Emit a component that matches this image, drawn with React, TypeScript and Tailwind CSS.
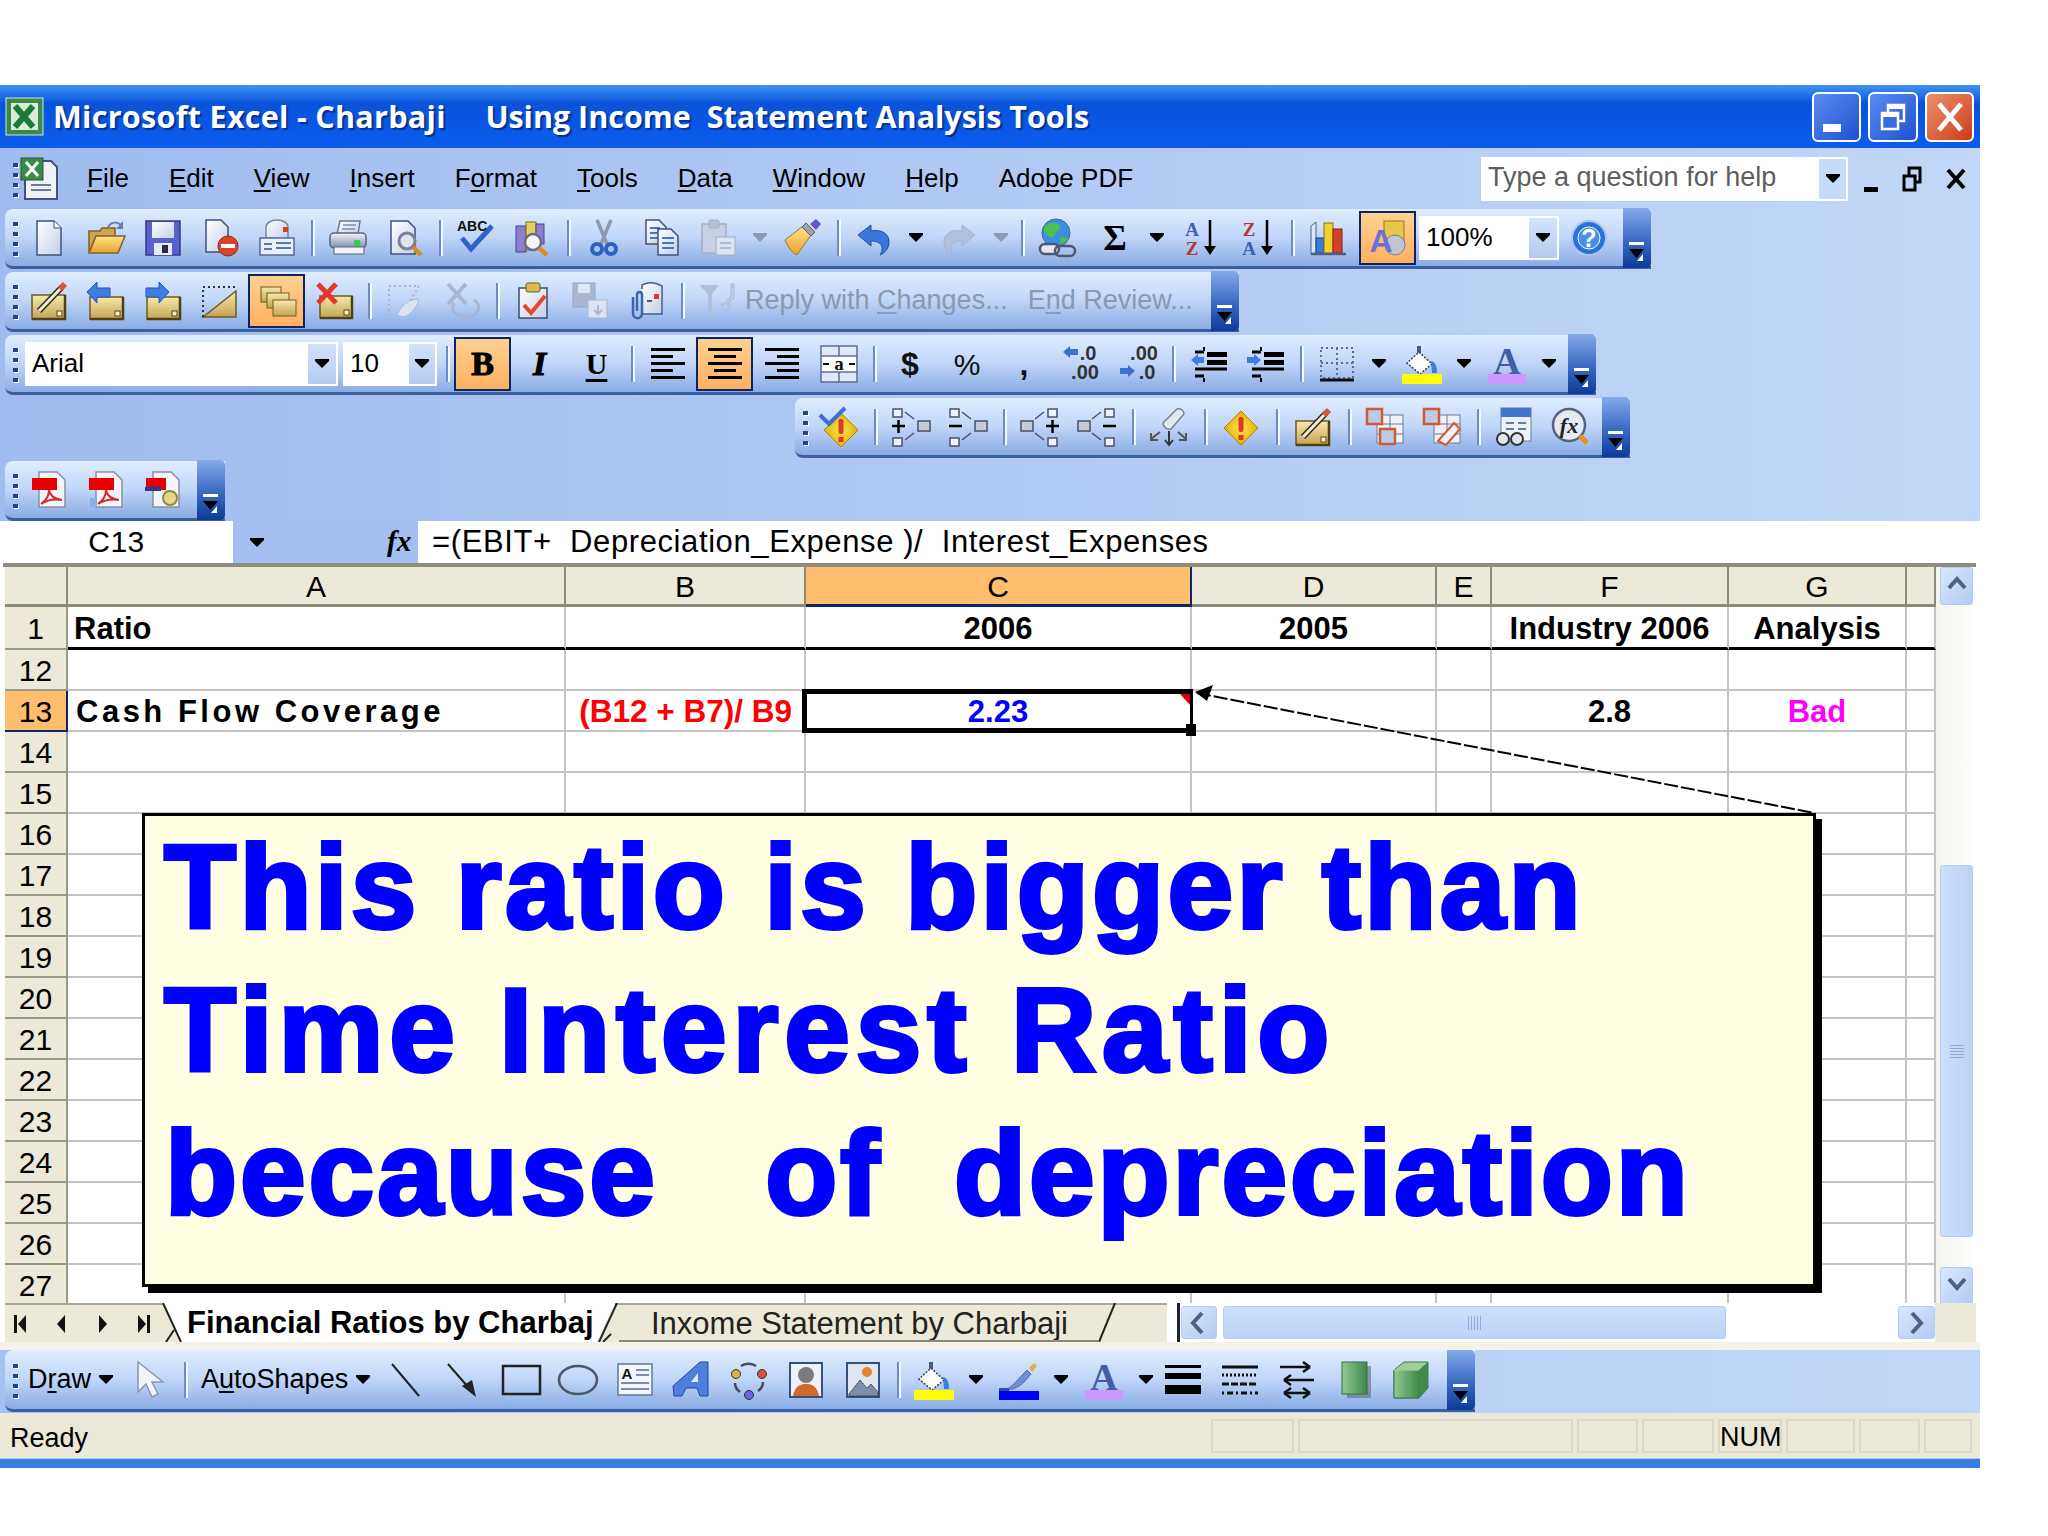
import type { ReactNode } from 'react';

const sans = "font-['Liberation_Sans',Arial,sans-serif]";

function Ico({ children, size = 40 }: { children: ReactNode; size?: number }) {
  return (
    <svg width={size} height={size} viewBox="0 0 40 40" className="block shrink-0 overflow-visible">
      {children}
    </svg>
  );
}

function Defs() {
  return (
    <svg width="0" height="0" className="absolute">
      <defs>
        <linearGradient id="paper" x1="0" y1="0" x2="1" y2="1">
          <stop offset="0" stopColor="#ffffff" />
          <stop offset="1" stopColor="#c3cfe8" />
        </linearGradient>
        <linearGradient id="gold" x1="0" y1="0" x2="0" y2="1">
          <stop offset="0" stopColor="#f6e9ad" />
          <stop offset="1" stopColor="#c2a452" />
        </linearGradient>
        <linearGradient id="folder" x1="0" y1="0" x2="0" y2="1">
          <stop offset="0" stopColor="#ffe38c" />
          <stop offset="1" stopColor="#e5a22b" />
        </linearGradient>
        <linearGradient id="metal" x1="0" y1="0" x2="0" y2="1">
          <stop offset="0" stopColor="#f4f6fb" />
          <stop offset="1" stopColor="#7f8ba8" />
        </linearGradient>
        <linearGradient id="green" x1="0" y1="0" x2="1" y2="0">
          <stop offset="0" stopColor="#8fca8f" />
          <stop offset="1" stopColor="#3f8a4a" />
        </linearGradient>
        <radialGradient id="warn" cx="0.5" cy="0.5" r="0.6">
          <stop offset="0" stopColor="#ffe74a" />
          <stop offset="1" stopColor="#d9a400" />
        </radialGradient>
      </defs>
    </svg>
  );
}

function Page({ x = 8, y = 3, w = 23, h = 33 }: { x?: number; y?: number; w?: number; h?: number }) {
  return (
    <path
      d={`M${x} ${y}h${w - 7}l7 7v${h - 7}h-${w}z`}
      fill="url(#paper)"
      stroke="#41507c"
      strokeWidth="1.5"
    />
  );
}

function NoteBase({ x = 5, y = 13, w = 31, h = 24 }: { x?: number; y?: number; w?: number; h?: number }) {
  return (
    <g>
      <rect x={x} y={y} width={w} height={h} fill="url(#gold)" stroke="#6e5a20" strokeWidth="1.5" />
      <path d={`M${x + w} ${y}v${h}h-${w}`} fill="none" stroke="#4f3f12" strokeWidth="2.5" />
      <rect x={x + w - 8} y={y + h - 8} width="5" height="5" fill="#f8f0c8" stroke="#5a4815" />
    </g>
  );
}

// row 1
const New = () => (<Ico><Page x={8} y={3} w={24} h={34} /><path d="M25 3v7h7" fill="#fff" stroke="#41507c" /></Ico>);
const Open = () => (
  <Ico>
    <path d="M3 34V13h11l2-3h13v7" fill="#cda650" stroke="#7d6322" strokeWidth="1.5" />
    <path d="M3 35l7-17h29l-7 17z" fill="url(#folder)" stroke="#7d6322" strokeWidth="1.5" />
    <path d="M22 9c3-5 9-6 13-2" fill="none" stroke="#6080bd" strokeWidth="2" />
    <path d="M37 3v8h-7z" fill="#6080bd" />
  </Ico>
);
const Save = () => (
  <Ico>
    <rect x="3" y="3" width="34" height="34" fill="#5c60c9" stroke="#34388c" strokeWidth="1.5" />
    <rect x="9" y="4" width="22" height="16" fill="url(#paper)" />
    <rect x="11" y="25" width="18" height="12" fill="#e6e9f5" />
    <rect x="19" y="27" width="6" height="8" fill="#2a2a40" />
  </Ico>
);
const Perm = () => (
  <Ico>
    <Page x={6} y={2} w={22} h={32} />
    <circle cx="28" cy="28" r="10" fill="#d8452a" stroke="#8e2a16" />
    <rect x="21" y="26" width="14" height="4" fill="#fff" />
  </Ico>
);
const Mail = () => (
  <Ico>
    <path d="M9 20V9c0-4 5-7 11-7s11 3 11 7v12z" fill="url(#paper)" stroke="#7a86a8" strokeWidth="1.5" />
    <rect x="26" y="9" width="5" height="5" fill="#df3d2a" />
    <rect x="3" y="20" width="34" height="17" fill="#e9effb" stroke="#56679a" strokeWidth="1.5" />
    <path d="M7 26h8M7 31h8M19 25h15M19 30h15" stroke="#5a76b6" strokeWidth="2" />
  </Ico>
);
const Print = () => (
  <Ico>
    <path d="M12 3h20l-2 13H9z" fill="url(#paper)" stroke="#6f7890" strokeWidth="1.5" />
    <path d="M15 7h13M14 11h13" stroke="#7f8aa8" strokeWidth="1.5" />
    <rect x="2" y="15" width="36" height="15" rx="4" fill="url(#metal)" stroke="#5b647c" strokeWidth="1.5" />
    <rect x="6" y="29" width="30" height="7" fill="#f2f4fa" stroke="#5b647c" />
    <rect x="26" y="22" width="6" height="6" fill="#2fd257" />
  </Ico>
);
const Preview = () => (
  <Ico>
    <Page x={6} y={3} w={24} h={33} />
    <circle cx="22" cy="23" r="8" fill="#dfe4ee" stroke="#7a8196" strokeWidth="3" />
    <path d="M28 29l8 8" stroke="#d98a25" strokeWidth="4.5" />
  </Ico>
);
const Spell = () => (
  <Ico>
    <text x="1" y="13" fontSize="14" fontWeight="700" fontFamily="Liberation Sans" fill="#111">ABC</text>
    <path d="M6 20l9 11L36 8" fill="none" stroke="#2f62c8" strokeWidth="5" />
  </Ico>
);
const Research = () => (
  <Ico>
    <rect x="3" y="8" width="10" height="26" fill="#8c7fcf" stroke="#4c4590" />
    <rect x="13" y="4" width="10" height="28" fill="#e4cf62" stroke="#7d6f1f" />
    <rect x="23" y="6" width="8" height="20" fill="#8c7fcf" stroke="#4c4590" />
    <circle cx="20" cy="24" r="8" fill="#f2f4f8" stroke="#6b6f7d" strokeWidth="2.5" />
    <path d="M26 30l8 7" stroke="#d98a25" strokeWidth="4.5" />
  </Ico>
);
const Cut = () => (
  <Ico>
    <path d="M13 2l10 24M27 2L17 26" stroke="#8d97ad" strokeWidth="3.5" />
    <circle cx="13" cy="31" r="5" fill="none" stroke="#2d62c4" strokeWidth="4" />
    <circle cx="27" cy="31" r="5" fill="none" stroke="#2d62c4" strokeWidth="4" />
  </Ico>
);
const Copy = () => (
  <Ico>
    <Page x={5} y={2} w={20} h={24} />
    <path d="M9 10h10M9 15h10M9 20h8" stroke="#4875c8" strokeWidth="2" />
    <Page x={17} y={11} w={20} h={26} />
    <path d="M21 20h12M21 25h12M21 30h12" stroke="#4875c8" strokeWidth="2" />
  </Ico>
);
const Paste = () => (
  <Ico>
    <rect x="4" y="6" width="24" height="29" fill="#c7cfe2" stroke="#a4aec8" strokeWidth="1.5" />
    <rect x="11" y="2" width="10" height="8" rx="2" fill="#b7c0d6" stroke="#a4aec8" />
    <rect x="18" y="19" width="19" height="18" fill="#dde3f0" stroke="#a4aec8" />
    <path d="M22 25h11M22 30h11" stroke="#aeb8cf" strokeWidth="2" />
  </Ico>
);
const Brush = () => (
  <Ico>
    <path d="M2 22 20 8l8 9-14 20c-5-2-9-8-12-15z" fill="url(#folder)" stroke="#8d7a3a" />
    <path d="M19 9l9 9 4-4-9-9z" fill="#9ea4ad" stroke="#5d626c" />
    <path d="M27 6l6-5 5 5-5 6z" fill="#6a55c0" />
  </Ico>
);
const Undo = () => (
  <Ico>
    <path d="M4 17 17 7v6c11-2 18 3 18 11 0 6-4 11-9 13 4-6 3-14-9-14v5z" fill="#3a76dc" stroke="#1f4fa8" />
  </Ico>
);
const Redo = () => (
  <svg width="40" height="40" viewBox="0 0 40 40" className="block shrink-0 -scale-x-100">
    <path d="M4 17 17 7v6c11-2 18 3 18 11 0 6-4 11-9 13 4-6 3-14-9-14v5z" fill="#b3c0da" stroke="#a4b2d0" />
  </svg>
);
const Link = () => (
  <Ico>
    <circle cx="18" cy="15" r="14" fill="#3d8ee0" stroke="#3a6aa8" />
    <path d="M8 7c6-4 12-3 14 1 1 4-4 4-5 8s-5 4-8 1-4-7-1-10z" fill="#4cc04a" />
    <path d="M22 20c4-2 7-1 8 1-2 3-5 5-8 5z" fill="#4cc04a" />
    <rect x="2" y="26" width="19" height="10" rx="5" fill="#e4e8f2" stroke="#4e586f" strokeWidth="2.5" />
    <rect x="17" y="28" width="20" height="10" rx="5" fill="none" stroke="#4e586f" strokeWidth="2.5" />
  </Ico>
);
const Sigma = () => (
  <Ico>
    <text x="20" y="32" textAnchor="middle" fontSize="36" fontWeight="700" fontFamily="Liberation Serif" fill="#000">Σ</text>
  </Ico>
);
const Sort = ({ up }: { up?: boolean }) => (
  <Ico>
    <text x="12" y="18" textAnchor="middle" fontSize="19" fontWeight="700" fontFamily="Liberation Serif" fill={up ? '#b03a30' : '#3b62b4'}>{up ? 'Z' : 'A'}</text>
    <text x="12" y="37" textAnchor="middle" fontSize="19" fontWeight="700" fontFamily="Liberation Serif" fill={up ? '#3b62b4' : '#b03a30'}>{up ? 'A' : 'Z'}</text>
    <path d="M30 2v30" stroke="#000" strokeWidth="2.5" />
    <path d="M24 28h12l-6 9z" fill="#000" />
  </Ico>
);
const Chart = () => (
  <Ico>
    <path d="M3 36V8l5-4v28" fill="#dfe6f5" stroke="#4d5f8e" />
    <rect x="8" y="20" width="8" height="15" fill="#3b7ce2" stroke="#1d3f82" />
    <rect x="16" y="5" width="9" height="30" fill="#f1d032" stroke="#8a7410" />
    <rect x="25" y="11" width="9" height="24" fill="#d8402a" stroke="#7e2212" />
    <path d="M3 36h35" stroke="#4d5f8e" strokeWidth="2.5" />
  </Ico>
);
const DrawTool = () => (
  <Ico>
    <rect x="16" y="3" width="20" height="20" fill="#e8c64a" stroke="#8f7a26" />
    <circle cx="27" cy="27" r="10" fill="#bfc5d4" stroke="#777e90" />
    <text x="13" y="34" textAnchor="middle" fontSize="32" fontWeight="700" fontFamily="Liberation Sans" fill="#6f70d4">A</text>
  </Ico>
);
const Help = () => (
  <Ico>
    <circle cx="20" cy="20" r="17" fill="#2a72d8" stroke="#a9c6f2" strokeWidth="2" />
    <circle cx="20" cy="20" r="11" fill="#4a8fe6" stroke="#fff" />
    <text x="20" y="29" textAnchor="middle" fontSize="25" fontWeight="700" fontFamily="Liberation Sans" fill="#fff">?</text>
  </Ico>
);

// row 2
const NewNote = () => (
  <Ico>
    <NoteBase x={3} y={14} w={33} h={24} />
    <path d="M10 30 33 6" stroke="#2e2a18" strokeWidth="6" />
    <path d="M10 30 33 6" stroke="#f4ecd4" strokeWidth="3" />
    <path d="M31 8l5-5" stroke="#d8543a" strokeWidth="6" />
  </Ico>
);
const PrevNote = ({ next }: { next?: boolean }) => (
  <Ico>
    <NoteBase x={4} y={16} w={33} h={22} />
    {next ? <path d="M26 11 16 1v6H3v9h13v6z" fill="#3f7ce4" stroke="#2257b4" /> : <path d="M1 11 11 1v6h13v9H11v6z" fill="#3f7ce4" stroke="#2257b4" />}
  </Ico>
);
const ShowNote = () => (
  <Ico>
    <path d="M3 36 36 10v26z" fill="url(#gold)" stroke="#6e5a20" strokeWidth="1.5" />
    <path d="M3 36V6h33" fill="none" stroke="#333" strokeWidth="2" strokeDasharray="2 3" />
  </Ico>
);
const AllNotes = () => (
  <Ico>
    <rect x="4" y="6" width="20" height="15" fill="url(#gold)" stroke="#6e5a20" />
    <rect x="10" y="12" width="22" height="15" fill="url(#gold)" stroke="#6e5a20" />
    <rect x="16" y="19" width="23" height="16" fill="url(#gold)" stroke="#6e5a20" />
  </Ico>
);
const DelNote = () => (
  <Ico>
    <NoteBase x={6} y={15} w={32} h={22} />
    <path d="M4 3l18 19M22 3 4 22" stroke="#e8352a" strokeWidth="5" />
  </Ico>
);
const InkGrey = () => (
  <Ico>
    <path d="M4 35V5h30l-12 20" fill="none" stroke="#a8b4cf" strokeWidth="2" strokeDasharray="2 3" />
    <path d="M12 34c4-10 12-16 22-16-2 8-8 16-16 18z" fill="#dbe2f0" stroke="#aeb9d0" />
  </Ico>
);
const DelInk = () => (
  <Ico>
    <path d="M6 3l18 20M24 3 6 23" stroke="#aab6d0" strokeWidth="4" />
    <path d="M12 22c-5 10 6 15 16 13s11-12 4-16" fill="none" stroke="#aab6d0" strokeWidth="3" />
  </Ico>
);
const Track = () => (
  <Ico>
    <rect x="6" y="7" width="28" height="30" fill="url(#paper)" stroke="#3d4a70" strokeWidth="1.5" />
    <rect x="13" y="2" width="14" height="9" rx="2" fill="#d9bb55" stroke="#6e5a20" />
    <path d="M11 24l7 8 14-17" fill="none" stroke="#e8452a" strokeWidth="4" />
  </Ico>
);
const SaveSend = () => (
  <Ico>
    <rect x="3" y="2" width="22" height="24" fill="#aab5cf" stroke="#98a5c2" />
    <rect x="8" y="3" width="12" height="9" fill="#dfe5f2" />
    <rect x="18" y="19" width="19" height="18" fill="#dde3f0" stroke="#aab5cf" />
    <path d="M28 24v9M24 29l4 4 4-4" fill="none" stroke="#aab5cf" strokeWidth="2" />
  </Ico>
);
const Clip = () => (
  <Ico>
    <path d="M15 8V4c6-3 13-3 20 1v28H14" fill="url(#paper)" stroke="#4a5b8a" strokeWidth="1.5" />
    <rect x="27" y="13" width="5" height="5" fill="#e0392a" />
    <path d="M20 20h5" stroke="#4a5b8a" strokeWidth="2" />
    <path d="M6 16v16c0 7 9 7 9 0V14c0-4-5-4-5 0v16" fill="none" stroke="#3f63ad" strokeWidth="2.5" />
  </Ico>
);
const FlagReply = () => (
  <Ico>
    <path d="M1 4h20l-7 9v20l-4 1V13z" fill="#b3bfd6" />
    <path d="M36 3v14l-7 6h4l-5 7-5-7h3l7-8V3z" fill="#c1ccdf" stroke="#a9b6cf" />
  </Ico>
);

// row 3
const GlyphB = () => <span className="font-['Liberation_Serif',serif] font-bold text-[34px] leading-none text-black [-webkit-text-stroke:1px_#000]">B</span>;
const GlyphI = () => <span className="font-['Liberation_Serif',serif] font-bold italic text-[34px] leading-none text-black [-webkit-text-stroke:1px_#000]">I</span>;
const GlyphU = () => <span className="font-['Liberation_Serif',serif] font-bold underline decoration-[3px] underline-offset-[5px] text-[30px] leading-none text-black">U</span>;
const Align = ({ mode }: { mode: 'l' | 'c' | 'r' }) => {
  const w = [34, 22, 34, 22, 34];
  return (
    <Ico>
      {w.map((v, i) => {
        const x = mode === 'l' ? 3 : mode === 'c' ? 20 - v / 2 : 37 - v;
        return <rect key={i} x={x} y={4 + i * 7} width={v} height="3" fill="#000" />;
      })}
    </Ico>
  );
};
const Merge = () => (
  <Ico>
    <rect x="2" y="2" width="36" height="36" fill="#e2e8f5" stroke="#5d6c92" strokeWidth="1.5" />
    <rect x="3" y="12" width="34" height="16" fill="#fff" />
    <path d="M2 12h36M2 28h36M20 2v10M20 28v10" stroke="#5d6c92" strokeWidth="1.5" />
    <text x="20" y="26" textAnchor="middle" fontSize="19" fontWeight="700" fontFamily="Liberation Serif" fill="#111">a</text>
    <path d="M4 20h6M30 20h6" stroke="#111" strokeWidth="2" />
  </Ico>
);
const TextGlyph = ({ t, size = 32, cls = 'font-bold' }: { t: string; size?: number; cls?: string }) => (
  <Ico>
    <text x="20" y="31" textAnchor="middle" fontSize={size} fontFamily="Liberation Sans" fill="#111" className={cls}>{t}</text>
  </Ico>
);
const Decimal = ({ less }: { less?: boolean }) => (
  <Ico>
    <text x={less ? 26 : 27} y="16" textAnchor="middle" fontSize="20" fontWeight="700" fontFamily="Liberation Sans" fill="#333">{less ? '.00' : '.0'}</text>
    <text x={less ? 29 : 24} y="35" textAnchor="middle" fontSize="20" fontWeight="700" fontFamily="Liberation Sans" fill="#333">{less ? '.0' : '.00'}</text>
    {less ? <path d="M2 24h8v-3l7 6-7 6v-3H2z" fill="#3f6fd0" /> : <path d="M17 5H9V2L2 8l7 6v-3h8z" fill="#3f6fd0" />}
  </Ico>
);
const Indent = ({ more }: { more?: boolean }) => (
  <Ico>
    <path d="M15 3v4M15 34v4" stroke="#000" strokeWidth="2" />
    <rect x="18" y="8" width="20" height="5" fill="#000" />
    <rect x="18" y="16" width="20" height="5" fill="#000" />
    <path d="M6 8h9M6 25h32M6 32h9" stroke="#000" strokeWidth="3" />
    {more ? <path d="M1 13h7v-3l7 6-7 6v-3H1z" fill="#3f7ce4" /> : <path d="M15 13H9v-3l-7 6 7 6v-3h6z" fill="#3f7ce4" />}
  </Ico>
);
const Borders = () => (
  <Ico>
    <rect x="4" y="4" width="32" height="30" fill="none" stroke="#5f6b88" strokeWidth="2" strokeDasharray="2 3" />
    <path d="M20 4v30M4 19h32" stroke="#5f6b88" strokeWidth="2" strokeDasharray="2 3" />
    <path d="M3 36h34" stroke="#111" strokeWidth="3" />
  </Ico>
);
const Fill = () => (
  <Ico>
    <path d="M17 2v10" stroke="#4d5b7c" strokeWidth="4" />
    <path d="M17 8 30 20 18 30 5 19z" fill="#fff" stroke="#333d58" strokeWidth="1.5" strokeDasharray="2 1.5" />
    <path d="M29 17c4 1 6 4 6 12h-5z" fill="#3f7ce4" />
    <rect x="0" y="30" width="40" height="10" fill="#ffff00" />
  </Ico>
);
const FontColor = () => (
  <Ico>
    <text x="20" y="30" textAnchor="middle" fontSize="38" fontWeight="700" fontFamily="Liberation Serif" fill="#3f5fa8">A</text>
    <rect x="1" y="30" width="38" height="10" fill="#cc99ff" />
  </Ico>
);

// row 4
const Warn = ({ s = 0 }: { s?: number }) => (
  <g transform={`translate(${s} ${s})`}>
    <path d="M20 4 37 21 20 38 3 21z" fill="url(#warn)" stroke="#b38600" />
    <rect x="17.5" y="10" width="5" height="15" rx="2" fill="#e5332a" />
    <rect x="17.5" y="28" width="5" height="5" fill="#e5332a" />
  </g>
);
const CheckWarn = () => (<Ico><Warn s={2} /><path d="M1 8l9 9L26 1" fill="none" stroke="#3a6fd6" strokeWidth="4" /></Ico>);
const Box = ({ x, y, w = 9, h = 8 }: { x: number; y: number; w?: number; h?: number }) => (
  <rect x={x} y={y} width={w} height={h} fill="#eef2fb" stroke="#49506a" strokeWidth="1.5" />
);
const Prec = ({ minus }: { minus?: boolean }) => (
  <Ico>
    <Box x={2} y={2} />
    <Box x={2} y={31} />
    <rect x="27" y="14" width="12" height="10" fill="#c7ccd8" stroke="#49506a" strokeWidth="1.5" />
    <path d="M14 5l9 7M14 33l9-7" stroke="#49506a" strokeWidth="1.5" />
    <path d="M1 19h13" stroke="#000" strokeWidth="2.5" />
    {!minus && <path d="M7.5 13v13" stroke="#000" strokeWidth="2.5" />}
  </Ico>
);
const Dep = ({ minus }: { minus?: boolean }) => (
  <Ico>
    <Box x={28} y={2} />
    <Box x={28} y={31} />
    <rect x="1" y="14" width="12" height="10" fill="#c7ccd8" stroke="#49506a" strokeWidth="1.5" />
    <path d="M15 12l9-7M15 26l9 7" stroke="#49506a" strokeWidth="1.5" />
    <path d="M26 19h13" stroke="#000" strokeWidth="2.5" />
    {!minus && <path d="M32.5 13v13" stroke="#000" strokeWidth="2.5" />}
  </Ico>
);
const Eraser = () => (
  <Ico>
    <path d="M14 16 28 2c3-1 7 1 7 5L22 22c-4 1-8-2-8-6z" fill="#e4e8f0" stroke="#79829a" strokeWidth="1.5" />
    <path d="M20 24v13M16 33l4 5 4-5" fill="none" stroke="#333" strokeWidth="2" />
    <path d="M11 25l-9 7M2 26v7h7M29 25l8 7M37 26v7h-7" fill="none" stroke="#555" strokeWidth="2" />
  </Ico>
);
const Watch = ({ erase }: { erase?: boolean }) => (
  <Ico>
    <rect x="12" y="8" width="26" height="28" fill="#eef1f8" stroke="#6f7a96" />
    <path d="M25 8v28M12 17h26M12 27h26" stroke="#6f7a96" />
    <rect x="2" y="2" width="15" height="15" fill="#b8cbe8" stroke="#d05a32" strokeWidth="2.5" />
    {erase ? <path d="M16 34 32 16l6 6-14 16z" fill="#eef1f8" stroke="#d05a32" strokeWidth="2" /> : <rect x="15" y="22" width="15" height="15" fill="#b8cbe8" stroke="#d05a32" strokeWidth="2.5" />}
  </Ico>
);
const Calc = () => (
  <Ico>
    <rect x="7" y="1" width="30" height="33" fill="#edf1fa" stroke="#6b7b9d" />
    <rect x="7" y="1" width="30" height="9" fill="#4576ce" />
    <path d="M12 16h8M24 16h8M12 22h8M24 22h8" stroke="#6b7b9d" strokeWidth="2" />
    <circle cx="9" cy="32" r="6" fill="#dfe5ee" stroke="#333" strokeWidth="2" />
    <circle cx="23" cy="32" r="6" fill="#dfe5ee" stroke="#333" strokeWidth="2" />
  </Ico>
);
const FxMag = () => (
  <Ico>
    <circle cx="18" cy="18" r="16" fill="#e4e9f3" stroke="#59627a" strokeWidth="2.5" />
    <text x="18" y="26" textAnchor="middle" fontSize="22" fontStyle="italic" fontWeight="700" fontFamily="Liberation Serif" fill="#222">fx</text>
    <path d="M29 29l7 7" stroke="#e09428" strokeWidth="5" />
  </Ico>
);

// row 5
const Pdf = ({ v }: { v: number }) => (
  <Ico>
    <path d="M10 2h18l8 8v27H10z" fill="#f4f5f8" stroke="#8b90a0" strokeWidth="1.5" />
    <rect x="3" y="8" width={v === 2 ? 20 : 25} height="12" fill="#e80000" />
    {v === 2 ? (
      <>
        <path d="M2 19h16" stroke="#203a9c" strokeWidth="4" />
        <circle cx="27" cy="28" r="7" fill="#e4d98a" stroke="#8b8a40" strokeWidth="2" />
      </>
    ) : (
      <path d="M12 34c6-4 8-10 8-14 1 6 5 9 13 10-7-1-15 0-21 4z" fill="none" stroke="#d8262a" strokeWidth="2" />
    )}
    {v === 1 && <rect x="4" y="28" width="6" height="9" fill="#8cb0ec" />}
  </Ico>
);

// drawing row
const Cursor = () => (
  <Ico>
    <path d="M8 2v30l8-8 6 13 6-3-6-12h11z" fill="#f2f4fa" stroke="#8b96b0" strokeWidth="1.5" />
  </Ico>
);
const LineTool = () => (<Ico><path d="M5 4 32 36" stroke="#222" strokeWidth="2" /></Ico>);
const ArrowTool = () => (<Ico><path d="M4 4 24 27" stroke="#222" strokeWidth="2" /><path d="M18 26l10-6 4 17z" fill="#222" /></Ico>);
const RectTool = () => (<Ico><rect x="2" y="6" width="37" height="28" fill="none" stroke="#222" strokeWidth="2.5" /></Ico>);
const OvalTool = () => (<Ico><ellipse cx="20" cy="20" rx="19" ry="14" fill="none" stroke="#4d5567" strokeWidth="2.5" /></Ico>);
const TextBox = () => (
  <Ico>
    <rect x="3" y="4" width="34" height="31" fill="#f3f6fc" stroke="#66759a" strokeWidth="1.5" />
    <text x="12" y="19" textAnchor="middle" fontSize="15" fontWeight="700" fontFamily="Liberation Sans" fill="#111">A</text>
    <path d="M21 10h13M21 15h13M6 23h28M6 29h28" stroke="#7d8cae" strokeWidth="2" />
  </Ico>
);
const WordArt = () => (
  <Ico>
    <path d="M1 26 28 2h8v34h-8l-3-8H14l-4 8H2z" fill="#4f7fdc" stroke="#1f4aa2" />
    <path d="M19 22l7-9v9z" fill="#dfe9fb" />
  </Ico>
);
const Diagram = () => (
  <Ico>
    <circle cx="7" cy="14" r="4.5" fill="#d6b83a" stroke="#333" />
    <circle cx="33" cy="14" r="4.5" fill="#d8503a" stroke="#333" />
    <circle cx="20" cy="35" r="4.5" fill="#6f66d8" stroke="#333" />
    <path d="M12 6c4-3 11-3 15 0M34 22c0 4-2 7-5 9M11 32c-3-2-5-5-5-9" fill="none" stroke="#444a5c" strokeWidth="2.5" />
  </Ico>
);
const ClipArt = () => (
  <Ico>
    <rect x="4" y="3" width="32" height="34" fill="#eef2f8" stroke="#33507e" strokeWidth="2" />
    <circle cx="20" cy="15" r="8" fill="#7c7c7c" />
    <path d="M7 36c2-10 7-12 13-12s11 2 13 12z" fill="#d0692a" />
  </Ico>
);
const Picture = () => (
  <Ico>
    <rect x="4" y="3" width="32" height="34" fill="#dfe6f2" stroke="#33507e" strokeWidth="2" />
    <circle cx="24" cy="12" r="5" fill="#e88430" />
    <path d="M6 34 17 20l7 8 4-4 7 8v4H6z" fill="#7f8da8" stroke="#333" strokeDasharray="2 1" />
  </Ico>
);
const Pen = () => (
  <Ico>
    <path d="M6 30c8-3 12-10 22-20l4 4C24 24 18 30 6 30z" fill="#6f8fd8" stroke="#4f6cb5" />
    <path d="M30 8l5-5 3 3-5 6z" fill="#e0b040" />
    <rect x="0" y="28" width="10" height="4" fill="#2f4fa8" />
    <rect x="0" y="31" width="40" height="9" fill="#0000ff" />
  </Ico>
);
const LineStyle = () => (
  <Ico>
    <rect x="2" y="5" width="36" height="3" fill="#000" />
    <rect x="2" y="13" width="36" height="6" fill="#000" />
    <rect x="2" y="25" width="36" height="9" fill="#000" />
  </Ico>
);
const DashStyle = () => (
  <Ico>
    <path d="M2 7h36" stroke="#111" strokeWidth="3" />
    <path d="M2 15h36" stroke="#111" strokeWidth="3" strokeDasharray="2 2" />
    <path d="M2 24h36" stroke="#111" strokeWidth="3" strokeDasharray="7 2" />
    <path d="M2 33h36" stroke="#111" strokeWidth="3" strokeDasharray="2 3 6 3" />
  </Ico>
);
const ArrowStyle = () => (
  <Ico>
    <path d="M3 7h30M33 7l-7-5M33 7l-7 5" fill="none" stroke="#111" strokeWidth="2.5" />
    <path d="M37 20H7M7 20l7-5M7 20l7 5" fill="none" stroke="#111" strokeWidth="2.5" />
    <path d="M7 33h26M7 33l7-5M7 33l7 5M33 33l-7-5M33 33l-7 5" fill="none" stroke="#111" strokeWidth="2.5" />
  </Ico>
);
const Shadow = () => (
  <Ico>
    <rect x="13" y="6" width="24" height="32" fill="#5e6b80" opacity="0.6" />
    <rect x="8" y="2" width="25" height="32" fill="url(#green)" stroke="#357040" />
  </Ico>
);
const Cube = () => (
  <Ico>
    <path d="M3 10 13 2h24v26l-9 10H3z" fill="#9fcf9f" stroke="#3c7a48" />
    <path d="M3 10h25v28H3z" fill="url(#green)" stroke="#3c7a48" />
    <path d="M28 10 37 2v26l-9 10z" fill="#3f8a4a" />
    <path d="M3 10h25" stroke="#cfe8cf" />
  </Ico>
);

// shared bits
function Grip() {
  return (
    <div className="flex w-[15px] shrink-0 flex-col gap-[6px] pl-[8px] pt-[2px]">
      {[0, 1, 2, 3].map((i) => (
        <div key={i} className="h-[4px] w-[5px] bg-[#27437f] shadow-[1px_1px_0_#fff]" />
      ))}
    </div>
  );
}

function Btn({ children, on }: { children: ReactNode; on?: boolean }) {
  return (
    <div className={`flex h-[54px] w-[57px] shrink-0 items-center justify-center ${on ? 'border-[2px] border-[#0a246a] bg-gradient-to-b from-[#ffd08f] to-[#ffb060]' : ''}`}>
      {children}
    </div>
  );
}

function Sep({ w = 14 }: { w?: number }) {
  return (
    <div className={`flex shrink-0 justify-center ${w === 15 ? 'w-[15px]' : 'w-[14px]'}`}>
      <div className="h-[36px] w-[2px] bg-[#6a8cc8] shadow-[2px_0_0_#f4f8ff]" />
    </div>
  );
}

function Tri({ grey }: { grey?: boolean }) {
  return (
    <svg width="14" height="9" viewBox="0 0 14 9" className="block">
      <path d="M0 0h14v2l-7 7-7-7z" fill={grey ? '#8f9ab2' : '#000'} />
    </svg>
  );
}

function Drop({ grey }: { grey?: boolean }) {
  return (
    <div className="flex w-[28px] shrink-0 items-center justify-center">
      <Tri grey={grey} />
    </div>
  );
}

function Chevron() {
  return (
    <div className="ml-auto flex h-[60px] w-[28px] shrink-0 flex-col items-center justify-end rounded-r-[5px] bg-gradient-to-b from-[#85aaea] via-[#3f6fc4] to-[#0b3a99] pb-[6px]">
      <svg width="18" height="20" viewBox="0 0 18 20" className="block">
        <rect x="1" y="0" width="15" height="3" fill="#fff" />
        <path d="M1 7h15L8.5 16z" fill="#000" />
        <path d="M9 19l6-7v7z" fill="#fff" />
      </svg>
    </div>
  );
}

function Toolbar({ className = '', children }: { className?: string; children: ReactNode }) {
  return (
    <div className={`flex h-[60px] items-center rounded-l-[8px] border-b-[3px] border-[#3b5f9f] bg-gradient-to-b from-[#e0edfe] via-[#c0d5f8] to-[#88ace4] ${className}`}>
      {children}
    </div>
  );
}

function Combo({ text, w, dd }: { text: string; w: string; dd: string }) {
  return (
    <div className={`flex h-[44px] items-stretch border-[2px] border-white bg-white ${w}`}>
      <span className={`flex-1 pl-[5px] text-[26px] leading-[38px] text-black ${sans}`}>{text}</span>
      <div className={`flex items-center justify-center bg-gradient-to-b from-[#d4e3fb] to-[#b4cbef] ${dd}`}>
        <Tri />
      </div>
    </div>
  );
}

function Key({ a, k, b }: { a?: string; k: string; b?: string }) {
  return (
    <span className="whitespace-pre">
      {a}
      <span className="underline decoration-[2px] underline-offset-[3px]">{k}</span>
      {b}
    </span>
  );
}

const menus: [string, string, string][] = [
  ['', 'F', 'ile'],
  ['', 'E', 'dit'],
  ['', 'V', 'iew'],
  ['', 'I', 'nsert'],
  ['F', 'o', 'rmat'],
  ['', 'T', 'ools'],
  ['', 'D', 'ata'],
  ['', 'W', 'indow'],
  ['', 'H', 'elp'],
  ['Ado', 'b', 'e PDF'],
];

const cols = 'grid grid-cols-[63px_498px_240px_386px_245px_55px_237px_178px_29px]';
const cellLine = 'border-r-[2px] border-b-[2px] border-[#c4c4c4] leading-none';
const rowNums = [12, 13, 14, 15, 16, 17, 18, 19, 20, 21, 22, 23, 24, 25, 26, 27];

function RowHead({ n, on, h }: { n: number; on?: boolean; h: string }) {
  return (
    <div className={`flex items-center justify-center border-r-[2px] border-b-[2px] border-[#9a9888] pt-[2px] text-[30px] leading-none text-black ${h} ${on ? 'bg-[#ffbe6d] border-b-[#0a246a] border-r-[#0a246a]' : 'bg-[#ece9d8]'}`}>
      {n}
    </div>
  );
}

function ColHead({ t, on }: { t: string; on?: boolean }) {
  return (
    <div className={`flex h-[40px] items-center justify-center border-r-[2px] border-b-[3px] pt-[3px] text-[30px] leading-none text-black ${on ? 'border-[#0a246a] bg-[#ffbe6d]' : 'border-[#8c8a78] bg-[#ece9d8]'}`}>
      {t}
    </div>
  );
}

function HeadCell({ t, center }: { t?: string; center?: boolean }) {
  return (
    <div className={`flex h-[43px] items-center border-r-[2px] border-b-[3px] border-r-[#c4c4c4] border-b-black pt-[2px] text-[31px] font-bold leading-none text-black ${center ? 'justify-center' : 'pl-[6px]'}`}>
      {t}
    </div>
  );
}

function GridRow({ n, h }: { n: number; h: string }) {
  if (n === 13) {
    return (
      <div className={cols}>
        <RowHead n={n} on h={h} />
        <div className={`flex items-center pl-[8px] pt-[2px] text-[31px] font-bold tracking-[3.5px] text-black ${cellLine}`}>Cash Flow Coverage</div>
        <div className={`flex items-center justify-end pr-[12px] pt-[2px] text-[31.5px] font-bold text-[#ff0000] ${cellLine}`}>(B12 + B7)/ B9</div>
        <div className={`relative flex items-center justify-center pt-[2px] text-[31px] font-bold text-[#0000ff] ${cellLine}`}>
          2.23
          <div className="absolute -top-[2px] -right-[3px] -bottom-[3px] -left-[4px] border-[5px] border-r-[3px] border-black" />
          <div className="absolute top-[3px] right-[0px] h-0 w-0 border-t-[11px] border-l-[10px] border-t-[#e00000] border-l-transparent" />
          <div className="absolute -right-[6px] -bottom-[6px] h-[12px] w-[10px] bg-black" />
        </div>
        <div className={cellLine} />
        <div className={cellLine} />
        <div className={`flex items-center justify-center pt-[2px] text-[31px] font-bold text-black ${cellLine}`}>2.8</div>
        <div className={`flex items-center justify-center pt-[2px] text-[31px] font-bold text-[#ff00ff] ${cellLine}`}>Bad</div>
        <div className={cellLine} />
      </div>
    );
  }
  return (
    <div className={cols}>
      <RowHead n={n} h={h} />
      {[0, 1, 2, 3, 4, 5, 6, 7].map((i) => (
        <div key={i} className={cellLine} />
      ))}
    </div>
  );
}

function ScrollBtn({ dir, cls }: { dir: 'u' | 'd' | 'l' | 'r'; cls: string }) {
  const d = { u: 'M3 14 11 5l8 9', d: 'M3 5l8 9 8-9', l: 'M14 2 5 12l9 10', r: 'M6 2l9 10-9 10' }[dir];
  return (
    <div className={`flex items-center justify-center rounded-[3px] border border-[#b5cbf3] bg-gradient-to-br from-[#dbe7fd] to-[#b3caf3] ${cls}`}>
      <svg width="22" height="24" viewBox="0 0 22 24" className="block">
        <path d={d} fill="none" stroke="#4d6185" strokeWidth="4" />
      </svg>
    </div>
  );
}

function NavArrow({ d }: { d: string }) {
  return (
    <svg width="14" height="22" viewBox="0 0 14 22" className="block">
      <path d={d} fill="#111" />
    </svg>
  );
}

export default function App() {
  return (
    <div className={`min-h-[1536px] w-[2048px] bg-white pt-[85px] ${sans}`}>
      <Defs />
      <div className="flex w-[1980px] flex-col">
        {/* title bar */}
        <div className="flex h-[63px] items-center bg-gradient-to-b from-[#3f93f0] via-[#0a52dc] via-[30%] to-[#0c5cec] pl-[5px] pr-[6px]">
          <svg width="39" height="39" viewBox="0 0 39 39" className="block shrink-0">
            <rect x="1" y="1" width="37" height="37" fill="#3a8a4a" stroke="#cfe8cf" />
            <rect x="6" y="6" width="27" height="27" fill="#d8ecd8" />
            <path d="M10 9l18 21M28 9 10 30" stroke="#1a7a3a" strokeWidth="6" />
          </svg>
          <span className="ml-[9px] whitespace-pre font-['Open_Sans',sans-serif] text-[30.5px] font-bold text-white [text-shadow:2px_2px_1px_#06308f]">
            <span className="tracking-[.3px]">Microsoft Excel - Charbaji</span>
            {'     Using Income  Statement Analysis Tools'}
          </span>
          <div className="ml-auto flex gap-[7px]">
            <div className="flex h-[50px] w-[49px] items-end justify-start rounded-[6px] border-[2px] border-white bg-gradient-to-br from-[#5b8cf0] to-[#1f4fd0] pb-[8px] pl-[9px]">
              <div className="h-[8px] w-[18px] bg-white" />
            </div>
            <div className="flex h-[50px] w-[50px] items-center justify-center rounded-[6px] border-[2px] border-white bg-gradient-to-br from-[#5b8cf0] to-[#1f4fd0]">
              <svg width="28" height="30" viewBox="0 0 28 30" className="block">
                <rect x="9" y="3" width="16" height="16" fill="none" stroke="#fff" strokeWidth="2.5" />
                <rect x="9" y="3" width="16" height="4" fill="#fff" />
                <rect x="3" y="11" width="16" height="16" fill="#3a6adf" stroke="#fff" strokeWidth="2.5" />
                <rect x="3" y="11" width="16" height="4" fill="#fff" />
              </svg>
            </div>
            <div className="flex h-[50px] w-[49px] items-center justify-center rounded-[6px] border-[2px] border-white bg-gradient-to-br from-[#ee8f6c] to-[#c93a12]">
              <svg width="30" height="32" viewBox="0 0 30 32" className="block">
                <path d="M4 3l22 26M26 3 4 29" stroke="#fff" strokeWidth="5" />
              </svg>
            </div>
          </div>
        </div>

        {/* command bars */}
        <div className="flex h-[373px] flex-col bg-gradient-to-r from-[#9fbcf0] to-[#c2d7f7]">
          <div className="flex h-[61px] items-center pl-[5px] pr-[6px] text-[26px] text-black">
            <Grip />
            <svg width="44" height="44" viewBox="0 0 44 44" className="-ml-[3px] block shrink-0">
              <path d="M8 4h26l6 6v32H8z" fill="#eef2fb" stroke="#41507c" strokeWidth="2" />
              <rect x="4" y="1" width="22" height="22" fill="#3a8a4a" stroke="#1f5a2a" />
              <path d="M9 5l12 14M21 5 9 19" stroke="#fff" strokeWidth="3" />
              <path d="M14 28h20M14 33h20" stroke="#6a7ba5" strokeWidth="2" />
            </svg>
            <div className="ml-[6px] flex">
              {menus.map(([a, k, b]) => (
                <div key={a + k + b} className="px-[20px]">
                  <Key a={a} k={k} b={b} />
                </div>
              ))}
            </div>
            <div className="ml-auto flex h-[44px] w-[367px] items-stretch border-[2px] border-white bg-white">
              <span className="flex-1 pl-[5px] text-[27px] leading-[36px] text-[#5d5d5d]">Type a question for help</span>
              <div className="flex w-[27px] items-center justify-center bg-[#c8daf9]">
                <Tri />
              </div>
            </div>
            <div className="ml-[14px] flex w-[112px] items-center justify-between pr-[8px]">
              <div className="mt-[22px] ml-[2px] h-[5px] w-[14px] bg-black" />
              <svg width="20" height="26" viewBox="0 0 20 26" className="block">
                <rect x="7" y="2" width="11" height="14" fill="none" stroke="#000" strokeWidth="3" />
                <rect x="2" y="10" width="11" height="14" fill="#c2d7f7" stroke="#000" strokeWidth="3" />
              </svg>
              <svg width="20" height="22" viewBox="0 0 20 22" className="block">
                <path d="M2 2l16 18M18 2 2 20" stroke="#000" strokeWidth="4" />
              </svg>
            </div>
          </div>

          <div className="flex flex-col gap-[3px] pl-[5px]">
            <Toolbar className="w-[1646px]">
              <Grip />
              <Btn><New /></Btn>
              <Btn><Open /></Btn>
              <Btn><Save /></Btn>
              <Btn><Perm /></Btn>
              <Btn><Mail /></Btn>
              <Sep />
              <Btn><Print /></Btn>
              <Btn><Preview /></Btn>
              <Sep />
              <Btn><Spell /></Btn>
              <Btn><Research /></Btn>
              <Sep />
              <Btn><Cut /></Btn>
              <Btn><Copy /></Btn>
              <Btn><Paste /></Btn>
              <Drop grey />
              <Btn><Brush /></Btn>
              <Sep />
              <Btn><Undo /></Btn>
              <Drop />
              <Btn><Redo /></Btn>
              <Drop grey />
              <Sep />
              <Btn><Link /></Btn>
              <Btn><Sigma /></Btn>
              <Drop />
              <Btn><Sort /></Btn>
              <Btn><Sort up /></Btn>
              <Sep />
              <Btn><Chart /></Btn>
              <div className="ml-[3px]">
                <Btn on><DrawTool /></Btn>
              </div>
              <div className="ml-[3px]">
                <Combo text="100%" w="w-[140px]" dd="w-[28px]" />
              </div>
              <div className="flex w-[60px] justify-center">
                <Help />
              </div>
              <Chevron />
            </Toolbar>

            <Toolbar className="w-[1234px]">
              <Grip />
              <Btn><NewNote /></Btn>
              <Btn><PrevNote /></Btn>
              <Btn><PrevNote next /></Btn>
              <Btn><ShowNote /></Btn>
              <Btn on><AllNotes /></Btn>
              <Btn><DelNote /></Btn>
              <Sep />
              <Btn><InkGrey /></Btn>
              <Btn><DelInk /></Btn>
              <Sep />
              <Btn><Track /></Btn>
              <Btn><SaveSend /></Btn>
              <Btn><Clip /></Btn>
              <Sep />
              <Btn><FlagReply /></Btn>
              <span className="-ml-[1px] whitespace-pre text-[27px] text-[#8d98ae]">
                <Key a="Reply with " k="C" b="hanges..." />
              </span>
              <span className="ml-[20px] whitespace-pre text-[27px] text-[#8d98ae]">
                <Key a="E" k="n" b="d Review..." />
              </span>
              <Chevron />
            </Toolbar>

            <Toolbar className="w-[1591px]">
              <div className="w-[20px] shrink-0"><Grip /></div>
              <Combo text="Arial" w="w-[313px]" dd="w-[28px]" />
              <div className="ml-[5px]">
                <Combo text="10" w="w-[94px]" dd="w-[26px]" />
              </div>
              <div className="ml-[3px]"><Sep /></div>
              <Btn on><GlyphB /></Btn>
              <Btn><GlyphI /></Btn>
              <Btn><GlyphU /></Btn>
              <Sep />
              <Btn><Align mode="l" /></Btn>
              <Btn on><Align mode="c" /></Btn>
              <Btn><Align mode="r" /></Btn>
              <Btn><Merge /></Btn>
              <Sep />
              <Btn><TextGlyph t="$" /></Btn>
              <Btn><TextGlyph t="%" size={30} cls="font-normal" /></Btn>
              <Btn><TextGlyph t="," /></Btn>
              <Btn><Decimal /></Btn>
              <Btn><Decimal less /></Btn>
              <Sep />
              <Btn><Indent /></Btn>
              <Btn><Indent more /></Btn>
              <Sep />
              <Btn><Borders /></Btn>
              <Drop />
              <Btn><Fill /></Btn>
              <Drop />
              <Btn><FontColor /></Btn>
              <Drop />
              <Chevron />
            </Toolbar>

            <Toolbar className="ml-[790px] w-[835px]">
              <Grip />
              <Btn><CheckWarn /></Btn>
              <Sep w={15} />
              <Btn><Prec /></Btn>
              <Btn><Prec minus /></Btn>
              <Sep w={15} />
              <Btn><Dep /></Btn>
              <Btn><Dep minus /></Btn>
              <Sep w={15} />
              <Btn><Eraser /></Btn>
              <Sep w={15} />
              <Btn><Ico><Warn /></Ico></Btn>
              <Sep w={15} />
              <Btn><NewNote /></Btn>
              <Sep w={15} />
              <Btn><Watch /></Btn>
              <Btn><Watch erase /></Btn>
              <Sep w={15} />
              <Btn><Calc /></Btn>
              <Btn><FxMag /></Btn>
              <Chevron />
            </Toolbar>

            <Toolbar className="w-[220px]">
              <Grip />
              <Btn><Pdf v={0} /></Btn>
              <Btn><Pdf v={1} /></Btn>
              <Btn><Pdf v={2} /></Btn>
              <Chevron />
            </Toolbar>
          </div>
        </div>

        {/* formula bar */}
        <div className="flex h-[42px] bg-white pl-[5px]">
          <div className="flex h-[40px] w-[228px] items-center justify-center pr-[5px] text-[30px] tracking-[.5px] text-black">C13</div>
          <div className="flex h-full w-[185px] items-center bg-[#a3bff1]">
            <div className="ml-[17px]"><Tri /></div>
            <span className="ml-[123px] font-['Liberation_Serif',serif] text-[29px] font-bold italic text-black">fx</span>
          </div>
          <span className="whitespace-pre pl-[14px] text-[31px] leading-[42px] tracking-[.6px] text-black">
            =(EBIT+  Depreciation_Expense )/  Interest_Expenses
          </span>
        </div>

        {/* sheet */}
        <div className="relative h-[740px] pl-[3px] pr-[4px]">
          <div className="flex h-full border-t-[4px] border-[#8e8c7c] bg-white pl-[2px]">
            <div className="h-full w-[1931px] overflow-hidden">
              <div className={cols}>
                <div className="h-[40px] border-r-[2px] border-b-[3px] border-[#8c8a78] bg-[#ece9d8]" />
                <ColHead t="A" />
                <ColHead t="B" />
                <ColHead t="C" on />
                <ColHead t="D" />
                <ColHead t="E" />
                <ColHead t="F" />
                <ColHead t="G" />
                <ColHead t="" />
              </div>
              <div className={cols}>
                <RowHead n={1} h="h-[43px]" />
                <HeadCell t="Ratio" />
                <HeadCell />
                <HeadCell t="2006" center />
                <HeadCell t="2005" center />
                <HeadCell />
                <HeadCell t="Industry 2006" center />
                <HeadCell t="Analysis" center />
                <HeadCell />
              </div>
              {rowNums.map((n) => (
                <GridRow key={n} n={n} h="h-[41px]" />
              ))}
            </div>

            {/* vertical scrollbar */}
            <div className="flex w-[40px] flex-col bg-gradient-to-r from-[#f3f3ef] to-white pl-[4px] pr-[3px]">
              <ScrollBtn dir="u" cls="h-[38px] shrink-0" />
              <div className="mt-[260px] flex h-[372px] items-center justify-center rounded-[3px] border border-[#b5cbf3] bg-gradient-to-r from-[#cfdffb] to-[#bdd2f8]">
                <div className="flex w-[14px] flex-col gap-[2px]">
                  {[0, 1, 2, 3, 4].map((i) => (
                    <div key={i} className="h-[1px] bg-[#8fa9d8]" />
                  ))}
                </div>
              </div>
              <ScrollBtn dir="d" cls="mt-auto mb-[-2px] h-[38px] shrink-0" />
            </div>
          </div>

          {/* comment callout */}
          <svg width="1980" height="300" viewBox="0 0 1980 300" className="pointer-events-none absolute top-[4px] left-0">
            <path d="M1197 126 1814 246" stroke="#000" strokeWidth="2" strokeDasharray="14 3" />
            <path d="M1195 125l18-7-6 16z" fill="#000" />
          </svg>
          <div className="absolute top-[250px] left-[142px] h-[474px] w-[1674px] border-[3px] border-black bg-[#fffee3] pl-[17px] shadow-[6px_6px_0_#000]">
            <div className="whitespace-pre text-[118px] font-bold leading-[143px] text-[#0000ff] [-webkit-text-stroke:4px_#0000ff]">
              <div className="ml-[2px] tracking-[3.3px]">This ratio is bigger than</div>
              <div className="ml-[2px] tracking-[5.85px]">Time Interest Ratio</div>
              <div className="ml-[3px] tracking-[2.95px]">because   of  depreciation</div>
            </div>
          </div>
        </div>

        {/* sheet tabs + h scroll */}
        <div className="relative flex h-[39px] items-stretch bg-white pl-[5px] pr-[4px]">
          <div className="flex w-[158px] items-center justify-between border-t-[2px] border-[#aca899] bg-[#ece9d8] pl-[8px] pr-[12px]">
            <NavArrow d="M1 2h3v18H1zM13 2v18L5 11z" />
            <NavArrow d="M11 2v18L3 11z" />
            <NavArrow d="M3 2v18l8-9z" />
            <NavArrow d="M13 2h-3v18h3zM1 2v18l8-9z" />
          </div>
          <div className="bg-[#ece9d8]">
            <div className="flex h-full w-[452px] items-center bg-white pl-[24px] text-[31px] font-bold leading-none text-black [clip-path:polygon(0_0,100%_0,96%_100%,4%_100%)]">
              Financial Ratios by Charbaj
            </div>
          </div>
          <div className="flex w-[505px] items-center border-t-[2px] border-[#aca899] bg-[#ece9d8] pl-[36px] text-[31px] leading-none text-[#222]">
            Inxome Statement by Charbaji
          </div>
          <div className="w-[47px] border-t-[2px] border-[#aca899] bg-[#ece9d8]" />
          <div className="ml-[10px] mr-[1px] w-[3px] bg-[#222]" />
          <div className="flex flex-1 items-center bg-white py-[3px]">
            <ScrollBtn dir="l" cls="h-full w-[36px] shrink-0" />
            <div className="ml-[6px] flex h-full w-[503px] items-center justify-center rounded-[3px] border border-[#b5cbf3] bg-gradient-to-b from-[#cfdffb] to-[#bdd2f8]">
              <div className="flex h-[14px] gap-[2px]">
                {[0, 1, 2, 3, 4].map((i) => (
                  <div key={i} className="w-[1px] bg-[#8fa9d8]" />
                ))}
              </div>
            </div>
            <ScrollBtn dir="r" cls="ml-auto h-full w-[37px] shrink-0" />
          </div>
          <div className="w-[41px] bg-[#ece9d8]" />
          <svg width="1180" height="39" viewBox="0 0 1180 39" className="pointer-events-none absolute top-0 left-0">
            <path d="M163 0l18 39M166 39l8-12M617 0l-18 39M603 39l8-8M1115 0l-16 39" fill="none" stroke="#222" strokeWidth="2" />
            <path d="M619 38h480" stroke="#8a8878" strokeWidth="2" />
          </svg>
        </div>
        <div className="h-[8px] bg-[#f4f2e8]" />

        {/* drawing toolbar */}
        <div className="flex h-[63px] bg-gradient-to-r from-[#a5c1f2] to-[#c2d7f7] pl-[5px]">
          <Toolbar className="h-[62px] w-[1470px]">
            <Grip />
            <span className="pl-[8px] text-[27px] text-black"><Key a="D" k="r" b="aw" /></span>
            <div className="flex w-[30px] justify-center"><Tri /></div>
            <Btn><Cursor /></Btn>
            <Sep />
            <span className="pl-[9px] text-[27px] text-black"><Key a="A" k="u" b="toShapes" /></span>
            <div className="flex w-[30px] justify-center"><Tri /></div>
            <Btn><LineTool /></Btn>
            <Btn><ArrowTool /></Btn>
            <Btn><RectTool /></Btn>
            <Btn><OvalTool /></Btn>
            <Btn><TextBox /></Btn>
            <Btn><WordArt /></Btn>
            <Btn><Diagram /></Btn>
            <Btn><ClipArt /></Btn>
            <Btn><Picture /></Btn>
            <Sep />
            <Btn><Fill /></Btn>
            <Drop />
            <Btn><Pen /></Btn>
            <Drop />
            <Btn><FontColor /></Btn>
            <Drop />
            <div className="-ml-[6px]"><Btn><LineStyle /></Btn></div>
            <Btn><DashStyle /></Btn>
            <Btn><ArrowStyle /></Btn>
            <Btn><Shadow /></Btn>
            <Btn><Cube /></Btn>
            <Chevron />
          </Toolbar>
        </div>

        {/* status bar */}
        <div className="flex h-[45px] items-center bg-[#ebe8d9] pl-[10px] pr-[8px] text-[27px] text-black">
          <span className="pt-[6px]">Ready</span>
          <div className="ml-auto flex h-[34px] gap-[4px] text-[27px] leading-[32px]">
            {['w-[83px]', 'w-[275px]', 'w-[61px]', 'w-[72px]', 'w-[64px]', 'w-[69px]', 'w-[61px]', 'w-[48px]'].map((w, i) => (
              <div key={w + i} className={`border-[2px] border-[#dcd9c8] text-center ${w}`}>
                {i === 4 ? 'NUM' : ''}
              </div>
            ))}
          </div>
        </div>
        <div className="h-[10px] border-t border-[#a9c8f3] bg-[#3a7fdf]" />
      </div>
    </div>
  );
}
